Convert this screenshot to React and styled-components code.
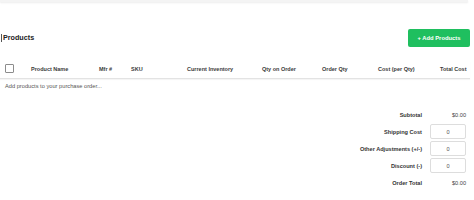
import { styled, createGlobalStyle } from "styled-components";

const GlobalStyle = createGlobalStyle`
    html, body {
        margin: 0;
        padding: 0;
        background: #fff;
        font-family: "Liberation Sans", Arial, sans-serif;
        color: #333;
    }
`;

const Page = styled.div`
    width: 474px;
    height: 200px;
    overflow: hidden;
    box-sizing: border-box;
    padding-right: 4px;
`;

const TopEdge = styled.div`
    height: 2px;
    margin-right: 2px;
    background: #f4f4f4;
    box-shadow: 0 1px 2px rgba(0, 0, 0, 0.08);
`;

const TitleRow = styled.div`
    display: flex;
    justify-content: space-between;
    align-items: center;
    margin-top: 27px;
    height: 18px;
`;

const Title = styled.h2`
    margin: 0 0 1px;
    font-size: 7.2px;
    font-weight: 700;
    color: #222;
    display: flex;
    align-items: center;

    &::before {
        content: "";
        width: 1px;
        height: 8px;
        margin: 0 1px 0 1px;
        background: #555;
    }
`;

const AddButton = styled.button`
    height: 18px;
    width: 62px;
    border: none;
    border-radius: 2px;
    background: #1fbf5f;
    color: #fff;
    font-family: inherit;
    font-size: 5.8px;
    font-weight: 700;
    padding: 0;
    cursor: pointer;
`;

const HeaderRow = styled.div`
    display: grid;
    grid-template-columns: 31px 68px 32px 56px 75px 60px 56px 62px 30px;
    align-items: center;
    height: 15px;
    margin-top: 14px;
    padding-bottom: 2px;
    border-bottom: 1px solid #e3e3e3;
    box-shadow: 0 1px 1px rgba(0, 0, 0, 0.04);
`;

const HeadCell = styled.div`
    font-size: 5.5px;
    font-weight: 700;
    color: #3a3a3a;
    white-space: nowrap;
    text-align: ${(p) => (p.$right ? "right" : "left")};
    padding-right: ${(p) => (p.$right ? "4px" : "0")};
`;

const Checkbox = styled.span`
    display: block;
    width: 9px;
    height: 9px;
    margin-left: 5px;
    border: 1px solid #8c8c8c;
    border-radius: 1px;
    box-sizing: border-box;
`;

const EmptyText = styled.div`
    font-size: 5.7px;
    color: #555;
    padding: 4px 0 0 5px;
`;

const Summary = styled.div`
    display: flex;
    flex-direction: column;
    align-items: flex-end;
    margin-top: 17px;
    padding-right: 4px;
`;

const SummaryRow = styled.div`
    display: flex;
    align-items: center;
    height: 17px;
    gap: 8px;
`;

const Label = styled.div`
    font-size: 5.6px;
    font-weight: 700;
    color: #333;
    text-align: right;
`;

const ValueCell = styled.div`
    width: 36px;
    font-size: 5.6px;
    color: #444;
    text-align: right;
`;

const Box = styled.div`
    width: 36px;
    height: 15px;
    box-sizing: border-box;
    border: 1px solid #ddd;
    border-radius: 2px;
    display: flex;
    align-items: center;
    justify-content: center;
    font-size: 5.6px;
    color: #555;
`;

const columns = [
    "Product Name",
    "Mfr #",
    "SKU",
    "Current Inventory",
    "Qty on Order",
    "Order Qty",
    "Cost (per Qty)",
];

const rows = [
    { label: "Subtotal", value: "$0.00" },
    { label: "Shipping Cost", input: "0" },
    { label: "Other Adjustments (+/-)", input: "0" },
    { label: "Discount (-)", input: "0" },
    { label: "Order Total", value: "$0.00" },
];

const App = () => {
    return (
        <Page>
            <GlobalStyle />
            <TopEdge />
            <TitleRow>
                <Title>Products</Title>
                <AddButton>+ Add Products</AddButton>
            </TitleRow>
            <HeaderRow>
                <Checkbox />
                {columns.map((c) => (
                    <HeadCell key={c}>{c}</HeadCell>
                ))}
                <HeadCell $right>Total Cost</HeadCell>
            </HeaderRow>
            <EmptyText>Add products to your purchase order...</EmptyText>
            <Summary>
                {rows.map((r) => (
                    <SummaryRow key={r.label}>
                        <Label>{r.label}</Label>
                        {r.input ? <Box>{r.input}</Box> : <ValueCell>{r.value}</ValueCell>}
                    </SummaryRow>
                ))}
            </Summary>
        </Page>
    );
};

export default App;
